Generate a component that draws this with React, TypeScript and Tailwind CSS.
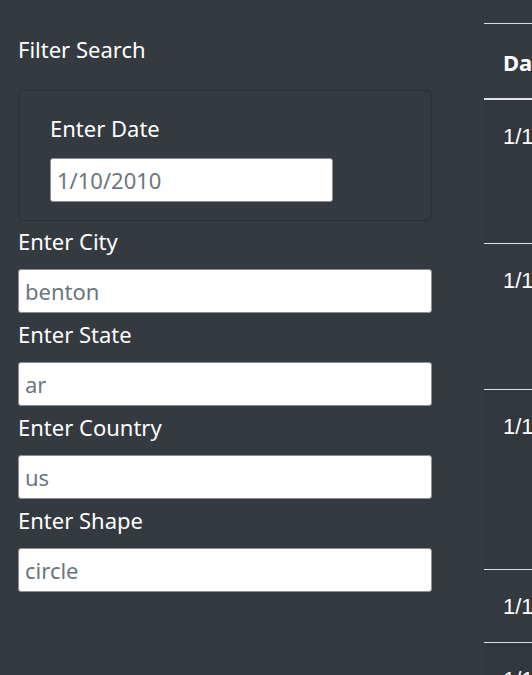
import React from "react";

const font = { fontFamily: '"Noto Sans", "Open Sans", Arial, sans-serif' };

interface Sighting {
  datetime: string;
  city: string;
  state: string;
  country: string;
  shape: string;
  duration: string;
  comments: string;
  height: string;
}

const rows: Sighting[] = [
  {
    datetime: "1/10/2010",
    city: "benton",
    state: "ar",
    country: "us",
    shape: "circle",
    duration: "5 mins.",
    comments: "Bright light moving slowly across the sky then vanished",
    height: "h-[145px]",
  },
  {
    datetime: "1/10/2010",
    city: "benton",
    state: "ar",
    country: "us",
    shape: "circle",
    duration: "2 min.",
    comments: "Orange glowing orb hovering over the tree line",
    height: "h-[146px]",
  },
  {
    datetime: "1/10/2010",
    city: "benton",
    state: "ar",
    country: "us",
    shape: "circle",
    duration: "10 minutes",
    comments: "Three circular lights in a triangle formation, no sound at all",
    height: "h-[180px]",
  },
  {
    datetime: "1/10/2010",
    city: "benton",
    state: "ar",
    country: "us",
    shape: "circle",
    duration: "30 sec",
    comments: "Fast white light",
    height: "h-[73px]",
  },
  {
    datetime: "1/10/2010",
    city: "benton",
    state: "ar",
    country: "us",
    shape: "circle",
    duration: "1 min",
    comments: "Red circle",
    height: "h-[73px]",
  },
];

function Field({ label, placeholder }: { label: string; placeholder: string }) {
  return (
    <div>
      <label className="block text-[22px] leading-[42px] text-white">{label}</label>
      <input
        type="text"
        placeholder={placeholder}
        className="mt-[7px] block h-[44px] w-full rounded-[3px] border border-[#8a8f94] bg-white px-[6px] text-[22px] text-[#495057] placeholder:text-[#6c757d] focus:outline-none"
        style={font}
      />
    </div>
  );
}

export default function App() {
  return (
    <div className="h-[675px] w-[532px] overflow-hidden bg-[#343a40]" style={font}>
      <div className="flex gap-[52px] pl-[18px]">
        <aside className="w-[414px] shrink-0 pt-[32px]">
          <h5 className="text-[22px] leading-[34px] text-white">Filter Search</h5>
          <div className="mt-[24px] rounded-[5px] border border-[#2c3035] px-[31px] pt-[16px] pb-[18px]">
            <label className="block text-[22px] leading-[42px] text-white">Enter Date</label>
            <input
              type="text"
              placeholder="1/10/2010"
              className="mt-[9px] block h-[44px] w-[283px] rounded-[3px] border border-[#8a8f94] bg-white px-[6px] text-[22px] text-[#495057] placeholder:text-[#6c757d] focus:outline-none"
              style={font}
            />
          </div>
          <div className="-mt-[1px]">
            <Field label="Enter City" placeholder="benton" />
            <Field label="Enter State" placeholder="ar" />
            <Field label="Enter Country" placeholder="us" />
            <Field label="Enter Shape" placeholder="circle" />
          </div>
        </aside>

        <main className="shrink-0 pt-[23px]">
          <table className="w-[1100px] border-collapse text-left text-white">
            <thead>
              <tr className="h-[75px] border-t border-b-2 border-t-[#dee2e6] border-b-[#dee2e6]">
                {["Date", "City", "State", "Country", "Shape", "Duration", "Comments"].map((h) => (
                  <th key={h} className="px-[19px] pt-[3px] align-middle text-[22px] font-bold">
                    {h}
                  </th>
                ))}
              </tr>
            </thead>
            <tbody style={{ fontFamily: '"Liberation Sans", Arial, sans-serif' }}>
              {rows.map((r, i) => (
                <tr
                  key={i}
                  className={`${r.height} border-b border-[#dee2e6] ${i % 2 === 0 ? "bg-[#32373e]" : "bg-[#343a40]"}`}
                >
                  <td className="px-[19px] pt-[22px] align-top text-[22px] leading-[30px]">{r.datetime}</td>
                  <td className="px-[19px] pt-[22px] align-top text-[22px] leading-[30px]">{r.city}</td>
                  <td className="px-[19px] pt-[22px] align-top text-[22px] leading-[30px]">{r.state}</td>
                  <td className="px-[19px] pt-[22px] align-top text-[22px] leading-[30px]">{r.country}</td>
                  <td className="px-[19px] pt-[22px] align-top text-[22px] leading-[30px]">{r.shape}</td>
                  <td className="px-[19px] pt-[22px] align-top text-[22px] leading-[30px]">{r.duration}</td>
                  <td className="w-[260px] px-[19px] pt-[22px] align-top text-[22px] leading-[30px]">{r.comments}</td>
                </tr>
              ))}
            </tbody>
          </table>
        </main>
      </div>
    </div>
  );
}
